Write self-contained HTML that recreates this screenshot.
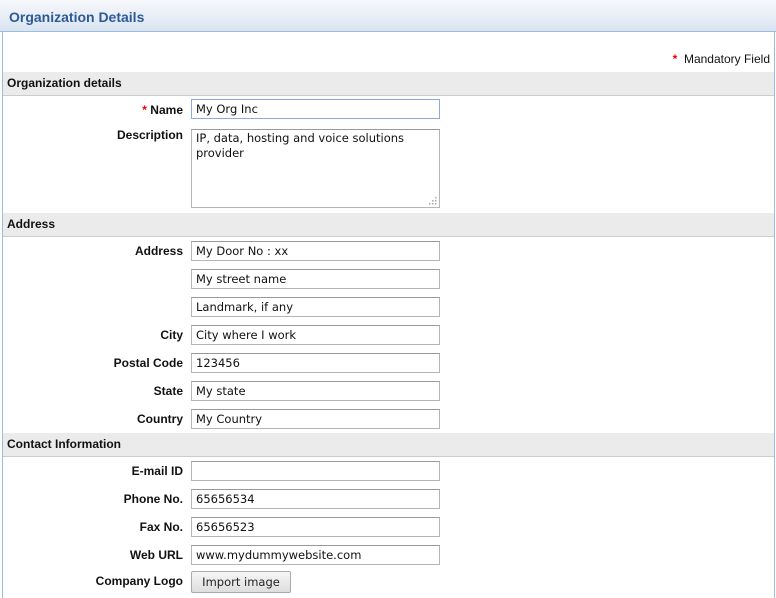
<!DOCTYPE html>
<html><head><style>
body{margin:0;width:776px;height:598px;overflow:hidden;background:#fff;font-family:"Liberation Sans",Arial,sans-serif;position:relative}
.hdr{position:absolute;left:0;top:0;width:776px;height:31px;background:linear-gradient(#f7f9fc,#d9e4f1);border-bottom:1px solid #9dbde0}
.hdr span{position:absolute;left:9px;top:9px;font-size:14px;font-weight:bold;color:#2e5a96}
.lb{position:absolute;left:2px;top:32px;width:1px;height:566px;background:#9dbde0}
.rb{position:absolute;left:774px;top:32px;width:1px;height:566px;background:#9dbde0}
.sec{position:absolute;left:3px;width:771px;height:23px;background:#ebebeb;border-bottom:1px solid #ccc;font-size:12px;font-weight:bold;color:#111}
.sec span{position:absolute;left:4px;top:4px}
.lab{position:absolute;right:593px;font-size:12px;font-weight:bold;color:#111;white-space:nowrap}
.in{position:absolute;left:191px;width:247px;height:18px;border:1px solid #b5b5b5;border-top-color:#999;font-family:"DejaVu Sans",Verdana,sans-serif;font-size:11.5px;color:#111;box-sizing:content-box}
.in span{position:absolute;left:4px;top:2px;white-space:nowrap}
.red{color:#e00}
</style></head><body>
<div class="hdr"><span>Organization Details</span></div>
<div class="lb"></div><div class="rb"></div>
<div style="position:absolute;right:6px;top:52px;font-size:12px;color:#111"><span class="red" style="font-weight:bold">*</span>&nbsp; Mandatory Field</div>
<div class="sec" style="top:72px"><span>Organization details</span></div>
<div class="lab" style="top:103px"><span class="red">*</span> Name</div>
<div class="in" style="top:99px;border:1px solid #8ea9de"><span>My Org Inc</span></div>
<div class="lab" style="top:128px">Description</div>
<div class="in" style="top:129px;height:77px"><span style="white-space:normal;width:240px;line-height:15px;top:1px">IP, data, hosting and voice solutions provider</span>
<svg style="position:absolute;right:2px;bottom:2px" width="8" height="8"><g fill="#aaa"><rect x="6" y="0" width="1.5" height="1.5"/><rect x="3" y="3" width="1.5" height="1.5"/><rect x="6" y="3" width="1.5" height="1.5"/><rect x="0" y="6" width="1.5" height="1.5"/><rect x="3" y="6" width="1.5" height="1.5"/><rect x="6" y="6" width="1.5" height="1.5"/></g></svg></div>
<div class="sec" style="top:213px"><span>Address</span></div>
<div class="lab" style="top:244px">Address</div><div class="in" style="top:241px"><span>My Door No : xx</span></div>
<div class="in" style="top:269px"><span>My street name</span></div>
<div class="in" style="top:297px"><span>Landmark, if any</span></div>
<div class="lab" style="top:328px">City</div><div class="in" style="top:325px"><span>City where I work</span></div>
<div class="lab" style="top:356px">Postal Code</div><div class="in" style="top:353px"><span>123456</span></div>
<div class="lab" style="top:384px">State</div><div class="in" style="top:381px"><span>My state</span></div>
<div class="lab" style="top:412px">Country</div><div class="in" style="top:409px"><span>My Country</span></div>
<div class="sec" style="top:433px"><span>Contact Information</span></div>
<div class="lab" style="top:464px">E-mail ID</div><div class="in" style="top:461px"></div>
<div class="lab" style="top:492px">Phone No.</div><div class="in" style="top:489px"><span>65656534</span></div>
<div class="lab" style="top:520px">Fax No.</div><div class="in" style="top:517px"><span>65656523</span></div>
<div class="lab" style="top:548px">Web URL</div><div class="in" style="top:545px"><span>www.mydummywebsite.com</span></div>
<div class="lab" style="top:574px">Company Logo</div>
<div style="position:absolute;left:191px;top:571px;width:98px;height:20px;border:1px solid #aaa;border-radius:2px;background:linear-gradient(#f6f6f6,#dedede);font-family:'DejaVu Sans',Verdana,sans-serif;font-size:11.5px;color:#222;text-align:center;line-height:20px">Import image</div>
</body></html>
